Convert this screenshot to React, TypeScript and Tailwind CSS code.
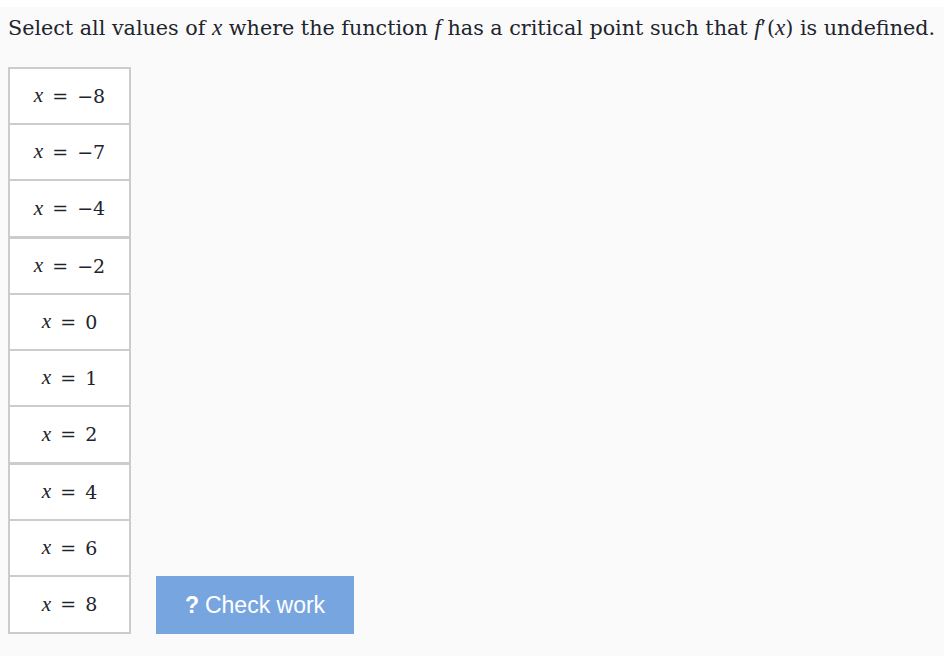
import React from "react"

const groups: string[][] = [
  ["−8", "−7", "−4"],
  ["−2", "0", "1", "2"],
  ["4", "6", "8"],
]

const serif = "font-['DejaVu_Serif',serif]"

// italic variable in a Times-like face, closer to the math italic look
function Var({ v }: { v: string }) {
  return <span className="font-['Liberation_Serif',serif] text-[1.12em] italic">{v}</span>
}

function Choice({ value, last }: { value: string; last: boolean }) {
  return (
    <div
      className={`flex items-center justify-center text-[19px] text-[#21242c] ${serif} ${
        last ? "h-[55px]" : "h-[56px] border-b-2 border-[#ccc]"
      }`}
    >
      <Var v="x" />
      <span className="mx-[9px]">=</span>
      <span>{value}</span>
    </div>
  )
}

export default function App() {
  return (
    <div className="min-h-[656px] bg-white">
      <div className="h-[7px] bg-white" />
      <div className="min-h-[649px] bg-[#fafafa] px-[8px]">
        <p className={`pt-[7px] text-[20.7px] leading-[26px] text-[#21242c] ${serif}`}>
          Select all values of <Var v="x" /> where the function <Var v="f" /> has a critical point
          such that <Var v="f" />
          <span className="mr-[1px] font-['Liberation_Serif',serif] text-[1.15em] leading-none">′</span>(
          <Var v="x" />) is undefined.
        </p>

        <div className="mt-[26px] flex items-end gap-[25px]">
          <div className="w-[123px] border-2 border-[#ccc] bg-white">
            {groups.map((g, gi) => (
              <div
                key={gi}
                className={gi < groups.length - 1 ? "border-b-[3px] border-[#ccc]" : ""}
              >
                {g.map((v, i) => (
                  <Choice key={v} value={v} last={i === g.length - 1} />
                ))}
              </div>
            ))}
          </div>

          <button className="flex h-[58px] w-[198px] items-center justify-center gap-[6px] bg-[#77a5e0] font-['Liberation_Sans',sans-serif] text-[23px] text-white">
            <span className="font-bold">?</span>
            <span>Check work</span>
          </button>
        </div>
      </div>
    </div>
  )
}
